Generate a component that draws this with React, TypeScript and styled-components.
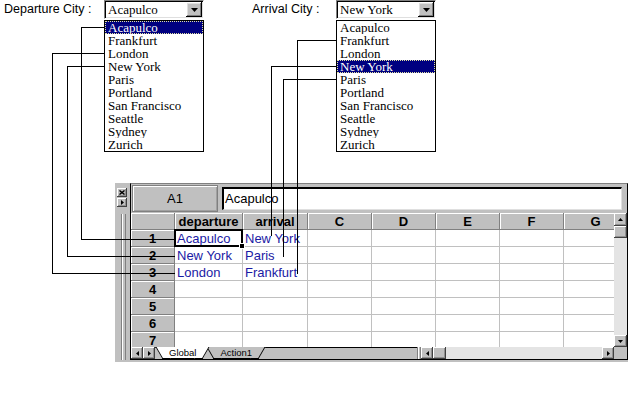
import React from "react";
import styled, { createGlobalStyle, css } from "styled-components";

const cities = [
  "Acapulco",
  "Frankfurt",
  "London",
  "New York",
  "Paris",
  "Portland",
  "San Francisco",
  "Seattle",
  "Sydney",
  "Zurich",
];

const columns = [
  { name: "", width: 44 },
  { name: "departure", width: 68 },
  { name: "arrival", width: 65 },
  { name: "C", width: 64 },
  { name: "D", width: 64 },
  { name: "E", width: 64 },
  { name: "F", width: 64 },
  { name: "G", width: 64 },
];

const rows = [
  ["Acapulco", "New York"],
  ["New York", "Paris"],
  ["London", "Frankfurt"],
  [],
  [],
  [],
  [],
];

// connector lines from list items to the cells (page coordinates)
const links = [
  "M104 27.5 H81.5 V239.5 H175",
  "M104 53.5 H52.5 V273.5 H175",
  "M104 66.5 H67.5 V256.5 H175",
  "M336 40.5 H297.5 V274",
  "M336 66.5 H271.5 V236",
  "M336 79.5 H283.5 V257",
];

const GlobalStyle = createGlobalStyle`
  html, body {
    margin: 0;
    padding: 0;
    background: #fff;
  }
  body {
    font-family: "Liberation Sans", Arial, sans-serif;
  }
`;

const raised = css`
  background: #c0c0c0;
  box-shadow: inset -1px -1px 0 #000, inset 1px 1px 0 #fff,
    inset -2px -2px 0 #808080, inset 2px 2px 0 #dfdfdf;
`;

const smallRaised = css`
  background: #c0c0c0;
  box-shadow: inset -1px -1px 0 #404040, inset 1px 1px 0 #fff,
    inset -2px -2px 0 #909090;
`;

const Page = styled.div`
  position: relative;
  width: 630px;
  height: 400px;
  overflow: hidden;
  background: #fff;
`;

const TopRow = styled.div`
  display: flex;
  height: 152px;
  padding-left: 4px;
`;

const Field = styled.div<{ $offset?: number }>`
  display: flex;
  align-items: flex-start;
  margin-left: ${p => p.$offset ?? 0}px;
`;

const Label = styled.div<{ $width: number }>`
  width: ${p => p.$width}px;
  font-size: 12.5px;
  line-height: 19px;
  color: #000;
  white-space: nowrap;
`;

const Select = styled.div`
  width: 100px;
`;

const ComboBox = styled.div`
  display: flex;
  align-items: center;
  height: 19px;
  box-sizing: border-box;
  padding: 0 1px 0 3px;
  background: #fff;
  border-top: 1px solid #808080;
  border-left: 1px solid #808080;
  border-right: 1px solid #fff;
  border-bottom: 1px solid #fff;
  box-shadow: inset 1px 1px 0 #000, inset -1px -1px 0 #dfdfdf;
`;

const ComboText = styled.span`
  flex: 1;
  font-family: "Liberation Serif", "Times New Roman", serif;
  font-size: 13px;
  line-height: 15px;
  color: #000;
`;

const ComboButton = styled.div`
  ${raised};
  width: 16px;
  height: 15px;
  display: flex;
  align-items: center;
  justify-content: center;
`;

const ListBox = styled.ul`
  margin: 1px 0 0;
  padding: 0;
  list-style: none;
  width: 100px;
  box-sizing: border-box;
  border: 1px solid #000;
  background: #fff;
`;

const ListItem = styled.li<{ $selected?: boolean }>`
  height: 13px;
  line-height: 13px;
  padding-left: 3px;
  font-family: "Liberation Serif", "Times New Roman", serif;
  font-size: 13px;
  color: #000;
  white-space: nowrap;
  overflow: hidden;
  ${p =>
    p.$selected &&
    css`
      background: #000080;
      color: #fff;
      outline: 1px dotted #e0e0a0;
      outline-offset: -1px;
    `}
`;

const Window = styled.div`
  display: flex;
  width: 513px;
  height: 179px;
  margin: 31px 0 0 115px;
  padding-bottom: 2px;
  box-sizing: border-box;
  background: #c0c0c0;
`;

const LeftStrip = styled.div`
  flex: none;
  display: flex;
  flex-direction: column;
  width: 15px;
  padding: 5px 0 0 2px;
  box-sizing: border-box;
`;

const StripButton = styled.div`
  ${smallRaised};
  width: 10px;
  height: 9px;
  margin-bottom: 1px;
  display: flex;
  align-items: center;
  justify-content: center;
`;

const Splitter = styled.div`
  flex: 1;
  width: 3px;
  margin: 6px 0 0 4px;
  border-left: 1px solid #808080;
  border-right: 1px solid #808080;
  box-shadow: inset 1px 0 0 #fff;
`;

const Main = styled.div`
  flex: 1;
  min-width: 0;
  display: flex;
  flex-direction: column;
  border-top: 1px solid #808080;
  border-left: 1px solid #000;
  border-right: 1px solid #000;
  border-bottom: 1px solid #000;
`;

const Toolbar = styled.div`
  display: flex;
  align-items: flex-start;
  gap: 4px;
  height: 29px;
  padding: 1px 0 0 1px;
  box-sizing: border-box;
`;

const NameBox = styled.div`
  flex: none;
  width: 86px;
  height: 27px;
  box-sizing: border-box;
  border: 1px solid #808080;
  box-shadow: inset 1px 1px 0 #fff, inset -1px -1px 0 #a0a0a0;
  font-size: 13px;
  line-height: 25px;
  text-align: center;
  color: #000;
`;

const FormulaBox = styled.div`
  flex: none;
  width: 400px;
  height: 23px;
  margin-top: 2px;
  box-sizing: border-box;
  padding-left: 1px;
  background: #fff;
  border-top: 2px solid #000;
  border-left: 2px solid #000;
  border-right: 1px solid #dfdfdf;
  border-bottom: 1px solid #dfdfdf;
  font-size: 13px;
  line-height: 20px;
  color: #000;
`;

const GridArea = styled.div`
  display: flex;
  height: 134px;
`;

const Sheet = styled.div`
  flex: 1;
  min-width: 0;
  overflow: hidden;
  background: #fff;
`;

const SheetGrid = styled.div<{ $cols: string }>`
  display: grid;
  grid-template-columns: ${p => p.$cols};
  grid-auto-rows: 17px;
  width: max-content;
`;

const HeadCell = styled.div`
  box-sizing: border-box;
  background: #c0c0c0;
  border-right: 1px solid #808080;
  border-bottom: 1px solid #808080;
  box-shadow: inset 1px 1px 0 #fff;
  font-size: 13px;
  font-weight: bold;
  line-height: 17px;
  text-align: center;
  color: #000;
  white-space: nowrap;
  overflow: hidden;
`;

const Cell = styled.div<{ $active?: boolean }>`
  position: relative;
  box-sizing: border-box;
  border-right: 1px solid #c0c0c0;
  border-bottom: 1px solid #c0c0c0;
  padding-left: 2px;
  font-size: 13px;
  line-height: 17px;
  color: #1a1aa4;
  white-space: nowrap;
  ${p =>
    p.$active &&
    css`
      &::before {
        content: "";
        position: absolute;
        left: -1px;
        top: -1px;
        right: -1px;
        bottom: -1px;
        border: 2px solid #000;
      }
      &::after {
        content: "";
        position: absolute;
        right: -3px;
        bottom: -3px;
        width: 4px;
        height: 4px;
        background: #000;
        border: 1px solid #fff;
        z-index: 1;
      }
    `}
`;

const VScroll = styled.div`
  flex: none;
  display: flex;
  flex-direction: column;
  width: 13px;
  background: #e4e4e4;
`;

const ScrollButton = styled.div<{ $w?: number; $h?: number }>`
  ${smallRaised};
  flex: none;
  width: ${p => p.$w ?? 13}px;
  height: ${p => p.$h ?? 13}px;
  display: flex;
  align-items: center;
  justify-content: center;
`;

const Track = styled.div`
  flex: 1;
  background: #e4e4e4;
`;

const TabRow = styled.div`
  display: flex;
  height: 12px;
  background: #c0c0c0;
`;

const TabArea = styled.div`
  flex: 1;
  min-width: 0;
  display: flex;
  overflow: hidden;
  box-shadow: inset 0 1px 0 #000;
`;

const TabStrip = styled.div`
  display: flex;
  padding-left: 8px;
`;

const Tab = styled.div<{ $active?: boolean; $shift?: number }>`
  position: relative;
  height: 11px;
  padding: 0 6px;
  margin-left: ${p => p.$shift ?? 0}px;
  background: ${p => (p.$active ? "#fff" : "#c0c0c0")};
  border-bottom: 1px solid #000;
  font-size: 9.5px;
  line-height: 11px;
  color: #000;
  white-space: nowrap;
  z-index: ${p => (p.$active ? 2 : 1)};
  &::before,
  &::after {
    content: "";
    position: absolute;
    top: 0;
    bottom: -1px;
    width: 7px;
    background: inherit;
    border-bottom: 1px solid #000;
    z-index: -1;
  }
  &::before {
    left: -4px;
    border-left: 1px solid #000;
    transform: skewX(30deg);
  }
  &::after {
    right: -4px;
    border-right: 1px solid #000;
    transform: skewX(-30deg);
  }
`;

const HScroll = styled.div`
  flex: none;
  display: flex;
  width: 197px;
`;

const SplitBar = styled.div`
  width: 3px;
  border-left: 1px solid #808080;
  background: #c0c0c0;
  box-shadow: inset 1px 0 0 #fff, inset -1px 0 0 #808080;
`;

const Corner = styled.div`
  flex: none;
  width: 13px;
  background: #c0c0c0;
`;

const Links = styled.svg`
  position: absolute;
  left: 0;
  top: 0;
  pointer-events: none;
  z-index: 10;
`;

type Dir = "up" | "down" | "left" | "right";

function Arrow({ dir, size = 5 }: { dir: Dir; size?: number }) {
  const h = Math.ceil(size / 2);
  const vertical = dir === "up" || dir === "down";
  const w = vertical ? size : h;
  const ht = vertical ? h : size;
  const points = {
    up: `0,${h} ${size},${h} ${size / 2},0`,
    down: `0,0 ${size},0 ${size / 2},${h}`,
    left: `${h},0 ${h},${size} 0,${size / 2}`,
    right: `0,0 0,${size} ${h},${size / 2}`,
  }[dir];
  return (
    <svg width={w} height={ht} viewBox={`0 0 ${w} ${ht}`}>
      <polygon points={points} fill="#000" />
    </svg>
  );
}

function CloseGlyph() {
  return (
    <svg width="6" height="5" viewBox="0 0 6 5">
      <path d="M0.5 0.5 L5.5 4.5 M5.5 0.5 L0.5 4.5" stroke="#000" strokeWidth="1.4" />
    </svg>
  );
}

function CityPicker({
  label,
  labelWidth,
  value,
  offset,
}: {
  label: string;
  labelWidth: number;
  value: string;
  offset?: number;
}) {
  return (
    <Field $offset={offset}>
      <Label $width={labelWidth}>{label}</Label>
      <Select>
        <ComboBox>
          <ComboText>{value}</ComboText>
          <ComboButton>
            <Arrow dir="down" size={7} />
          </ComboButton>
        </ComboBox>
        <ListBox>
          {cities.map(c => (
            <ListItem key={c} $selected={c === value}>
              {c}
            </ListItem>
          ))}
        </ListBox>
      </Select>
    </Field>
  );
}

export default function App() {
  const cols = columns.map(c => `${c.width}px`).join(" ");

  return (
    <Page>
      <GlobalStyle />
      <TopRow>
        <CityPicker label="Departure City :" labelWidth={100} value="Acapulco" />
        <CityPicker label="Arrival City :" labelWidth={84} value="New York" offset={48} />
      </TopRow>

      <Window>
        <LeftStrip>
          <StripButton>
            <CloseGlyph />
          </StripButton>
          <StripButton>
            <Arrow dir="right" size={5} />
          </StripButton>
          <Splitter />
        </LeftStrip>

        <Main>
          <Toolbar>
            <NameBox>A1</NameBox>
            <FormulaBox>Acapulco</FormulaBox>
          </Toolbar>

          <GridArea>
            <Sheet>
              <SheetGrid $cols={cols}>
                {columns.map((c, i) => (
                  <HeadCell key={`h${i}`}>{c.name}</HeadCell>
                ))}
                {rows.map((r, ri) => (
                  <React.Fragment key={ri}>
                    <HeadCell>{ri + 1}</HeadCell>
                    {columns.slice(1).map((_, ci) => (
                      <Cell key={ci} $active={ri === 0 && ci === 0}>
                        {r[ci] ?? ""}
                      </Cell>
                    ))}
                  </React.Fragment>
                ))}
              </SheetGrid>
            </Sheet>
            <VScroll>
              <ScrollButton>
                <Arrow dir="up" />
              </ScrollButton>
              <ScrollButton $h={12} />
              <Track />
              <ScrollButton $h={12}>
                <Arrow dir="down" />
              </ScrollButton>
            </VScroll>
          </GridArea>

          <TabRow>
            <TabArea>
              <ScrollButton $w={12} $h={12}>
                <Arrow dir="left" />
              </ScrollButton>
              <ScrollButton $w={12} $h={12}>
                <Arrow dir="right" />
              </ScrollButton>
              <TabStrip>
                <Tab $active>Global</Tab>
                <Tab $shift={12}>Action1</Tab>
              </TabStrip>
            </TabArea>
            <HScroll>
              <SplitBar />
              <ScrollButton $w={12} $h={12}>
                <Arrow dir="left" />
              </ScrollButton>
              <ScrollButton $w={13} $h={12} />
              <Track />
              <ScrollButton $w={12} $h={12}>
                <Arrow dir="right" />
              </ScrollButton>
            </HScroll>
            <Corner />
          </TabRow>
        </Main>
      </Window>

      <Links width="630" height="400" viewBox="0 0 630 400">
        {links.map(d => (
          <path key={d} d={d} fill="none" stroke="#000" strokeWidth="1" shapeRendering="crispEdges" />
        ))}
      </Links>
    </Page>
  );
}
